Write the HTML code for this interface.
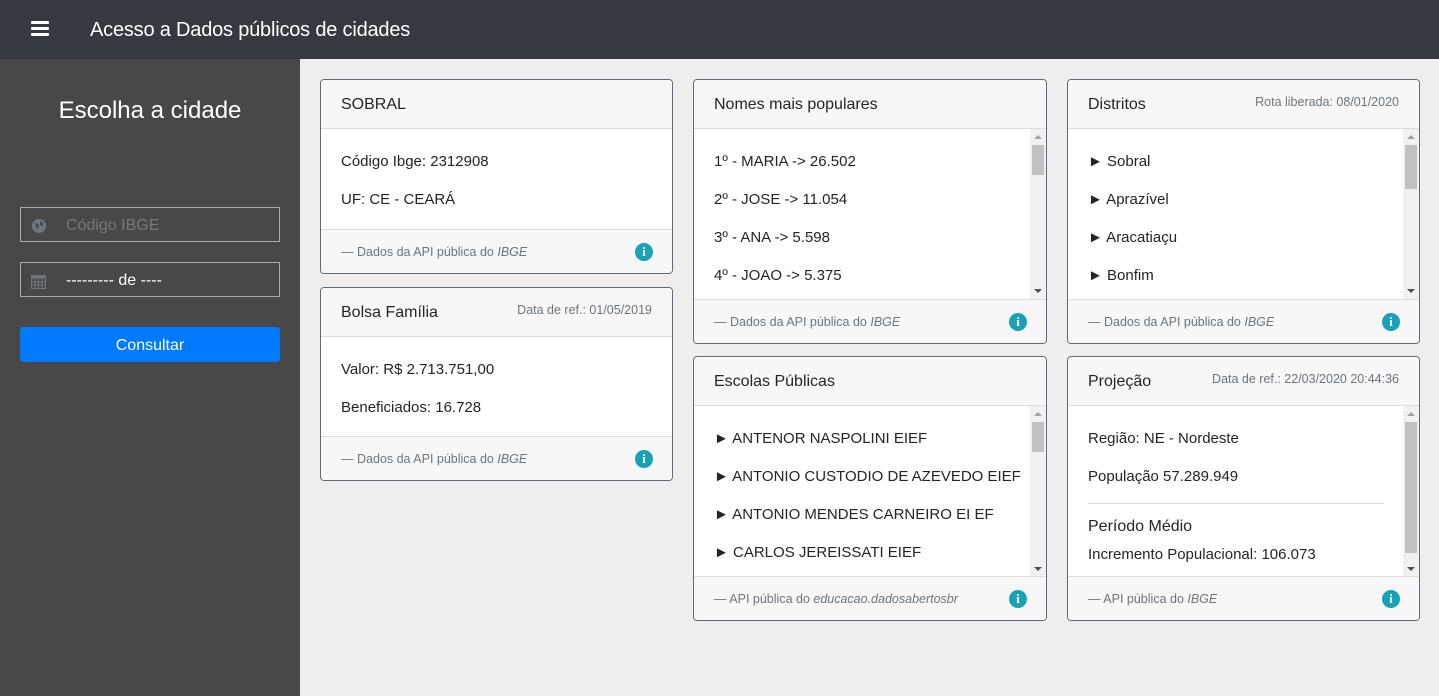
<!DOCTYPE html><html><head><meta charset="utf-8"><style>
*{box-sizing:border-box;margin:0;padding:0}
body{width:1439px;height:696px;overflow:hidden;background:#eeeeee;font-family:"Liberation Sans",sans-serif;color:#212529;position:relative}
.top{position:absolute;left:0;top:0;width:1439px;height:59px;background:#343a40;color:#fff}
.top .t{position:absolute;left:90px;top:19px;font-size:20px;letter-spacing:-0.2px}
.burger{position:absolute;left:31px;top:21px;width:18px}
.burger i{display:block;height:3px;background:#fff;margin-bottom:3px;border-radius:1px}
.side{position:absolute;left:0;top:59px;width:300px;height:637px;background:#484848}
.side h2{position:absolute;top:38px;width:300px;text-align:center;color:#fff;font-weight:normal;font-size:24px}
.inp{position:absolute;left:20px;width:260px;height:35px;border:1px solid #aaa}
.inp span{position:absolute;left:45px;top:9px;font-size:16px}
.btn{position:absolute;left:20px;top:268px;width:260px;height:35px;background:#007bff;border-radius:3px;color:#fff;text-align:center;line-height:37px;font-size:16px}
.card{position:absolute;background:#fff;border:1px solid #5f6b78;border-radius:4px;overflow:hidden}
.hd{height:49px;background:#f7f7f7;border-bottom:1px solid #ddd;position:relative}
.hd b{font-weight:normal;position:absolute;left:20px;top:16px;font-size:16px}
.hd em{font-style:normal;position:absolute;right:20px;top:15px;font-size:12.5px;color:#6c757d}
.bd{position:relative;overflow:hidden;padding:0 20px}
.bd p{font-size:15px;height:38px;line-height:38px}
.ft{position:absolute;left:0;right:0;bottom:0;height:44px;background:#f7f7f7;border-top:1px solid #ddd;font-size:12.5px;color:#6c757d}
.ft span{position:absolute;left:20px;top:15px}
.ft .ic{position:absolute;right:19px;top:13px;width:18px;height:18px;border-radius:50%;background:#17a2b8;color:#fff;font:bold 13px/18px "Liberation Serif",serif;text-align:center}
.sb{position:absolute;right:0;top:0;width:16px;height:100%;background:#f1f1f1}
.sb .th{position:absolute;left:2px;right:2px;background:#c1c1c1}
.sb .u,.sb .d{position:absolute;left:4px;width:0;height:0;border-left:4px solid transparent;border-right:4px solid transparent}
.sb .u{top:6px;border-bottom:4px solid #a3a3a3}
.sb .d{bottom:6px;border-top:4px solid #505050}
</style></head><body>
<div class="top"><div class="burger"><i></i><i></i><i></i></div><div class="t">Acesso a Dados públicos de cidades</div></div>
<div class="side"><h2>Escolha a cidade</h2>
<div class="inp" style="top:148px"><svg style="position:absolute;left:11px;top:11px" width="14" height="14" viewBox="0 0 14 14"><circle cx="7" cy="7" r="7" fill="#6c7680"/><path d="M3 4 l3 1 l1 3 l-2 2 z M8 2 l3 2 l0 3 l-3 -1z" fill="#484848"/></svg><span style="color:#777">Código IBGE</span></div>
<div class="inp" style="top:203px"><svg style="position:absolute;left:10px;top:10px" width="15" height="16" viewBox="0 0 15 16"><rect x="0.5" y="2.5" width="14" height="13" fill="none" stroke="#6c7680"/><rect x="0.5" y="2.5" width="14" height="3" fill="#6c7680"/><path d="M0 9h15M0 12h15M4 5v11M7.5 5v11M11 5v11" stroke="#6c7680"/></svg><span style="color:#fff">--------- de ----</span></div>
<div class="btn">Consultar</div></div>

<div class="card" style="left:320px;top:79px;width:353px;height:195px"><div class="hd"><b>SOBRAL</b></div><div class="bd" style="padding-top:14px"><p>Código Ibge: 2312908</p><p>UF: CE - CEARÁ</p></div><div class="ft"><span>— Dados da API pública do <i>IBGE</i></span><div class="ic">i</div></div></div>

<div class="card" style="left:320px;top:287px;width:353px;height:194px"><div class="hd"><b>Bolsa Família</b><em>Data de ref.: 01/05/2019</em></div><div class="bd" style="padding-top:14px"><p>Valor: R$ 2.713.751,00</p><p>Beneficiados: 16.728</p></div><div class="ft"><span>— Dados da API pública do <i>IBGE</i></span><div class="ic">i</div></div></div>

<div class="card" style="left:693px;top:79px;width:354px;height:265px"><div class="hd"><b>Nomes mais populares</b></div><div class="bd" style="height:170px;padding-top:14px"><p>1º - MARIA -&gt; 26.502</p><p>2º - JOSE -&gt; 11.054</p><p>3º - ANA -&gt; 5.598</p><p>4º - JOAO -&gt; 5.375</p><div class="sb"><div class="u"></div><div class="th" style="top:16px;height:30px"></div><div class="d"></div></div></div><div class="ft"><span>— Dados da API pública do <i>IBGE</i></span><div class="ic">i</div></div></div>

<div class="card" style="left:693px;top:356px;width:354px;height:265px"><div class="hd"><b>Escolas Públicas</b></div><div class="bd" style="height:171px;padding-top:14px"><p>► ANTENOR NASPOLINI EIEF</p><p>► ANTONIO CUSTODIO DE AZEVEDO EIEF</p><p>► ANTONIO MENDES CARNEIRO EI EF</p><p>► CARLOS JEREISSATI EIEF</p><div class="sb"><div class="u"></div><div class="th" style="top:16px;height:30px"></div><div class="d"></div></div></div><div class="ft"><span>— API pública do <i>educacao.dadosabertosbr</i></span><div class="ic">i</div></div></div>

<div class="card" style="left:1067px;top:79px;width:353px;height:265px"><div class="hd"><b>Distritos</b><em>Rota liberada: 08/01/2020</em></div><div class="bd" style="height:170px;padding-top:14px"><p>► Sobral</p><p>► Aprazível</p><p>► Aracatiaçu</p><p>► Bonfim</p><div class="sb"><div class="u"></div><div class="th" style="top:16px;height:44px"></div><div class="d"></div></div></div><div class="ft"><span>— Dados da API pública do <i>IBGE</i></span><div class="ic">i</div></div></div>

<div class="card" style="left:1067px;top:356px;width:353px;height:265px"><div class="hd"><b>Projeção</b><em>Data de ref.: 22/03/2020 20:44:36</em></div><div class="bd" style="height:171px;padding-top:14px"><p>Região: NE - Nordeste</p><p>População 57.289.949</p><div style="border-top:1px solid #ddd;width:296px;margin:7px 0 9px"></div><p style="font-size:16px;height:28px;line-height:28px">Período Médio</p><p style="height:28px;line-height:28px">Incremento Populacional: 106.073</p><div class="sb"><div class="u"></div><div class="th" style="top:16px;height:131px"></div><div class="d"></div></div></div><div class="ft"><span>— API pública do <i>IBGE</i></span><div class="ic">i</div></div></div>
</body></html>
